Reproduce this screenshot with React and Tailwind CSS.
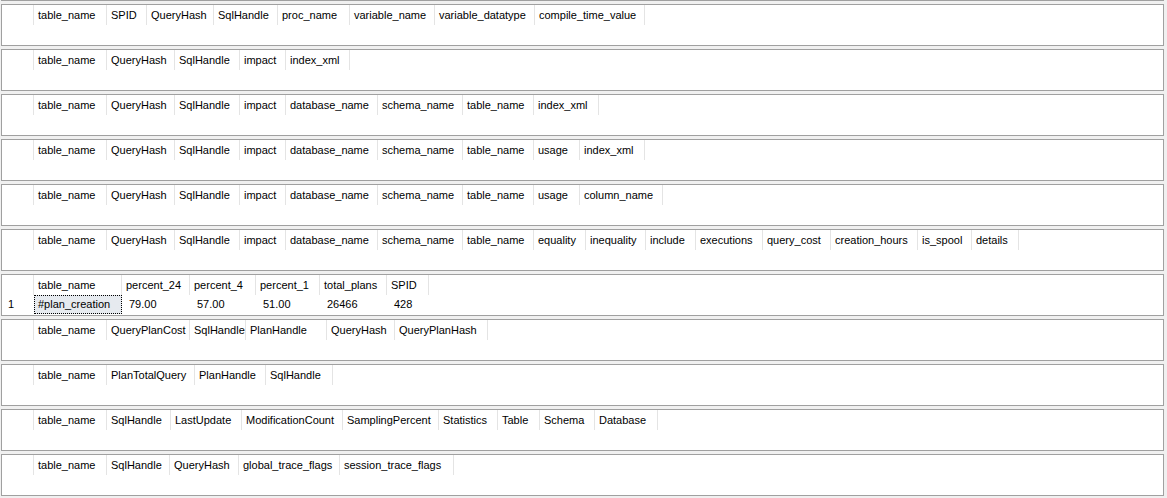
const panels = [
  [
    ['table_name', 'w-[73px]'], ['SPID', 'w-[40px]'], ['QueryHash', 'w-[67px]'], ['SqlHandle', 'w-[64px]'],
    ['proc_name', 'w-[72px]'], ['variable_name', 'w-[85px]'], ['variable_datatype', 'w-[100px]'], ['compile_time_value', 'w-[110px]'],
  ],
  [
    ['table_name', 'w-[73px]'], ['QueryHash', 'w-[68px]'], ['SqlHandle', 'w-[65px]'], ['impact', 'w-[46px]'], ['index_xml', 'w-[64px]'],
  ],
  [
    ['table_name', 'w-[73px]'], ['QueryHash', 'w-[68px]'], ['SqlHandle', 'w-[65px]'], ['impact', 'w-[46px]'],
    ['database_name', 'w-[92px]'], ['schema_name', 'w-[85px]'], ['table_name', 'w-[71px]'], ['index_xml', 'w-[65px]'],
  ],
  [
    ['table_name', 'w-[73px]'], ['QueryHash', 'w-[68px]'], ['SqlHandle', 'w-[65px]'], ['impact', 'w-[46px]'],
    ['database_name', 'w-[92px]'], ['schema_name', 'w-[85px]'], ['table_name', 'w-[71px]'], ['usage', 'w-[46px]'], ['index_xml', 'w-[65px]'],
  ],
  [
    ['table_name', 'w-[73px]'], ['QueryHash', 'w-[68px]'], ['SqlHandle', 'w-[65px]'], ['impact', 'w-[46px]'],
    ['database_name', 'w-[92px]'], ['schema_name', 'w-[85px]'], ['table_name', 'w-[71px]'], ['usage', 'w-[46px]'], ['column_name', 'w-[83px]'],
  ],
  [
    ['table_name', 'w-[73px]'], ['QueryHash', 'w-[68px]'], ['SqlHandle', 'w-[65px]'], ['impact', 'w-[46px]'],
    ['database_name', 'w-[92px]'], ['schema_name', 'w-[85px]'], ['table_name', 'w-[71px]'], ['equality', 'w-[52px]'],
    ['inequality', 'w-[60px]'], ['include', 'w-[50px]'], ['executions', 'w-[67px]'], ['query_cost', 'w-[68px]'],
    ['creation_hours', 'w-[87px]'], ['is_spool', 'w-[54px]'], ['details', 'w-[47px]'],
  ],
  'plan',
  [
    ['table_name', 'w-[73px]'], ['QueryPlanCost', 'w-[83px]'], ['SqlHandle', 'w-[56px]'], ['PlanHandle', 'w-[81px]'],
    ['QueryHash', 'w-[68px]'], ['QueryPlanHash', 'w-[93px]'],
  ],
  [
    ['table_name', 'w-[73px]'], ['PlanTotalQuery', 'w-[88px]'], ['PlanHandle', 'w-[71px]'], ['SqlHandle', 'w-[67px]'],
  ],
  [
    ['table_name', 'w-[73px]'], ['SqlHandle', 'w-[64px]'], ['LastUpdate', 'w-[71px]'], ['ModificationCount', 'w-[101px]'],
    ['SamplingPercent', 'w-[96px]'], ['Statistics', 'w-[59px]'], ['Table', 'w-[42px]'], ['Schema', 'w-[55px]'], ['Database', 'w-[63px]'],
  ],
  [
    ['table_name', 'w-[73px]'], ['SqlHandle', 'w-[63px]'], ['QueryHash', 'w-[69px]'], ['global_trace_flags', 'w-[101px]'],
    ['session_trace_flags', 'w-[114px]'],
  ],
];

// the one grid that returned a row
const planCols = [
  ['table_name', 'w-[88px]', '#plan_creation'],
  ['percent_24', 'w-[68px]', '79.00'],
  ['percent_4', 'w-[66px]', '57.00'],
  ['percent_1', 'w-[64px]', '51.00'],
  ['total_plans', 'w-[67px]', '26466'],
  ['SPID', 'w-[42px]', '428'],
];

function HeaderRow({ cols }) {
  return (
    <div className="flex h-[20px]">
      <div className="w-[32px] shrink-0 border-r border-[#e4e4e4]" />
      {cols.map(([name, w], i) => (
        <div
          key={i}
          className={`${w} shrink-0 flex items-center pl-[4px] border-r border-[#e4e4e4] whitespace-nowrap`}
        >
          {name}
        </div>
      ))}
    </div>
  );
}

function Panel({ children }) {
  return (
    <div className="ml-[1px] w-[1163px] h-[42px] shrink-0 border border-[#a0a0a0] bg-white">{children}</div>
  );
}

export default function App() {
  return (
    <div className="min-h-screen bg-[#f0f0f0] font-['Liberation_Sans',Arial,sans-serif] text-[11px] text-black">
      <div className="ml-[1px] w-[1163px] h-px bg-[#a0a0a0]" />
      <div className="flex flex-col gap-[3px] pt-[3px]">
        {panels.map((cols, i) =>
          cols === 'plan' ? (
            <Panel key={i}>
              <HeaderRow cols={planCols} />
              <div className="flex h-[19px]">
                <div className="w-[32px] shrink-0 flex items-center pl-[6px]">1</div>
                {planCols.map(([, w, val], j) =>
                  j === 0 ? (
                    <div
                      key={j}
                      className={`${w} shrink-0 flex items-center pl-[3px] border border-dotted border-black bg-[#e6eaef]`}
                    >
                      {val}
                    </div>
                  ) : (
                    <div key={j} className={`${w} shrink-0 flex items-center pl-[7px]`}>
                      {val}
                    </div>
                  )
                )}
              </div>
            </Panel>
          ) : (
            <Panel key={i}>
              <HeaderRow cols={cols} />
            </Panel>
          )
        )}
      </div>
    </div>
  );
}
